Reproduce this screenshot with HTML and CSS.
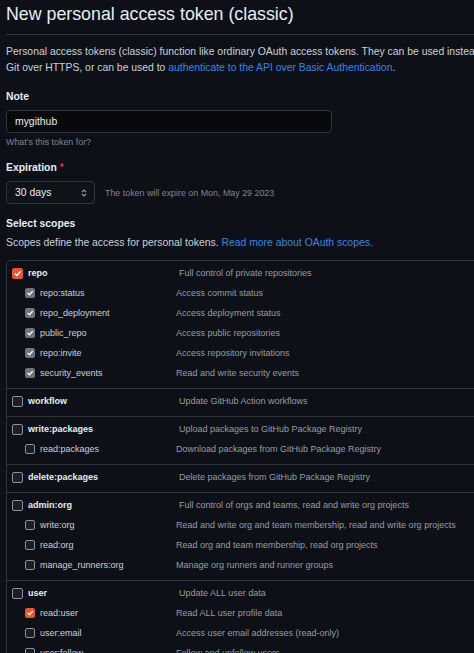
FILE: index.html
```html
<!DOCTYPE html>
<html lang="en">
<head>
<meta charset="utf-8">
<title>New personal access token (classic)</title>
<link rel="stylesheet" href="styles.css">
</head>
<body>
<main class="page">
  <h1 class="title">New personal access token (classic)</h1>
  <p class="intro">Personal access tokens (classic) function like ordinary OAuth access tokens. They can be used instead of a password for Git over HTTPS, or can be used to <a href="#">authenticate to the API over Basic Authentication</a>.</p>

  <div class="field note-field">
    <label class="label" for="note">Note</label>
    <input id="note" class="input" type="text" value="mygithub">
    <p class="hint">What's this token for?</p>
  </div>

  <div class="field exp-field">
    <div class="label">Expiration <span class="req">*</span></div>
    <div class="exp-row">
      <div class="select">
        <span>30 days</span>
        <svg class="arrows" viewBox="0 0 6 10" width="6" height="10"><path d="M1 4 3 2 5 4M1 6 3 8 5 6"/></svg>
      </div>
      <span class="exp-note">The token will expire on Mon, May 29 2023</span>
    </div>
  </div>

  <h2 class="label section">Select scopes</h2>
  <p class="scopes-intro">Scopes define the access for personal tokens. <a href="#">Read more about OAuth scopes.</a></p>

  <div class="scopes">
    <div class="group">
      <div class="row main"><span class="name"><span class="cb on"><svg viewBox="0 0 10 10"><path d="M2.3 5.2 4.3 7.2 8 3.1"/></svg></span>repo</span><span class="desc">Full control of private repositories</span></div>
      <div class="row sub"><span class="name"><span class="cb dis"><svg viewBox="0 0 10 10"><path d="M2.3 5.2 4.3 7.2 8 3.1"/></svg></span>repo:status</span><span class="desc">Access commit status</span></div>
      <div class="row sub"><span class="name"><span class="cb dis"><svg viewBox="0 0 10 10"><path d="M2.3 5.2 4.3 7.2 8 3.1"/></svg></span>repo_deployment</span><span class="desc">Access deployment status</span></div>
      <div class="row sub"><span class="name"><span class="cb dis"><svg viewBox="0 0 10 10"><path d="M2.3 5.2 4.3 7.2 8 3.1"/></svg></span>public_repo</span><span class="desc">Access public repositories</span></div>
      <div class="row sub"><span class="name"><span class="cb dis"><svg viewBox="0 0 10 10"><path d="M2.3 5.2 4.3 7.2 8 3.1"/></svg></span>repo:invite</span><span class="desc">Access repository invitations</span></div>
      <div class="row sub"><span class="name"><span class="cb dis"><svg viewBox="0 0 10 10"><path d="M2.3 5.2 4.3 7.2 8 3.1"/></svg></span>security_events</span><span class="desc">Read and write security events</span></div>
    </div>
    <div class="group">
      <div class="row main"><span class="name"><span class="cb"></span>workflow</span><span class="desc">Update GitHub Action workflows</span></div>
    </div>
    <div class="group">
      <div class="row main"><span class="name"><span class="cb"></span>write:packages</span><span class="desc">Upload packages to GitHub Package Registry</span></div>
      <div class="row sub"><span class="name"><span class="cb"></span>read:packages</span><span class="desc">Download packages from GitHub Package Registry</span></div>
    </div>
    <div class="group">
      <div class="row main"><span class="name"><span class="cb"></span>delete:packages</span><span class="desc">Delete packages from GitHub Package Registry</span></div>
    </div>
    <div class="group">
      <div class="row main"><span class="name"><span class="cb"></span>admin:org</span><span class="desc">Full control of orgs and teams, read and write org projects</span></div>
      <div class="row sub"><span class="name"><span class="cb"></span>write:org</span><span class="desc">Read and write org and team membership, read and write org projects</span></div>
      <div class="row sub"><span class="name"><span class="cb"></span>read:org</span><span class="desc">Read org and team membership, read org projects</span></div>
      <div class="row sub"><span class="name"><span class="cb"></span>manage_runners:org</span><span class="desc">Manage org runners and runner groups</span></div>
    </div>
    <div class="group">
      <div class="row main"><span class="name"><span class="cb"></span>user</span><span class="desc">Update ALL user data</span></div>
      <div class="row sub"><span class="name"><span class="cb on"><svg viewBox="0 0 10 10"><path d="M2.3 5.2 4.3 7.2 8 3.1"/></svg></span>read:user</span><span class="desc">Read ALL user profile data</span></div>
      <div class="row sub"><span class="name"><span class="cb"></span>user:email</span><span class="desc">Access user email addresses (read-only)</span></div>
      <div class="row sub"><span class="name"><span class="cb"></span>user:follow</span><span class="desc">Follow and unfollow users</span></div>
    </div>
  </div>
</main>
</body>
</html>
```

FILE: styles.css
```css
html, body {
  margin: 0;
  padding: 0;
  background: #0d1117;
  overflow: hidden;
}

body {
  font-family: "Liberation Sans", Arial, sans-serif;
  font-size: 10.4px;
  line-height: 16px;
  color: #c9d1d9;
}

.page {
  width: 570px;
  padding-left: 6px;
  box-sizing: border-box;
}

a {
  color: #3b82e8;
  text-decoration: none;
}

.title {
  margin: 0;
  padding: 2px 0 8px;
  font-size: 17.8px;
  line-height: 24px;
  font-weight: 400;
  color: #e6edf3;
  border-bottom: 1px solid #30363d;
}

.intro {
  margin: 9px 0 0;
  line-height: 16px;
}

.field {
  display: flex;
  flex-direction: column;
  align-items: flex-start;
}

.note-field {
  margin-top: 13px;
}

.label {
  display: block;
  margin: 0;
  font-size: 10.4px;
  line-height: 16px;
  font-weight: 700;
  color: #e6edf3;
}

.req {
  color: #f85149;
  font-weight: 400;
}

.input {
  margin: 5px 0 0;
  width: 326px;
  height: 23px;
  box-sizing: border-box;
  padding: 0 8px;
  border: 1px solid #30363d;
  border-radius: 4px;
  background: #07090d;
  color: #e6edf3;
  font-family: inherit;
  font-size: 10.4px;
  outline: none;
}

.hint {
  margin: 3px 0 0;
  font-size: 8.9px;
  line-height: 13px;
  color: #7d8590;
}

.exp-field {
  margin-top: 11px;
}

.exp-row {
  margin-top: 5px;
  display: flex;
  align-items: center;
  gap: 10px;
}

.select {
  width: 89px;
  height: 23px;
  box-sizing: border-box;
  padding: 0 7px 0 8px;
  border: 1px solid #30363d;
  border-radius: 4px;
  background: #0f1318;
  color: #e6edf3;
  display: flex;
  align-items: center;
  justify-content: space-between;
}

.arrows {
  fill: none;
  stroke: #8b949e;
  stroke-width: 1.2;
}

.exp-note {
  font-size: 8.9px;
  color: #7d8590;
}

.section {
  margin-top: 12px;
}

.scopes-intro {
  margin: 3px 0 0;
}

.scopes {
  margin-top: 9px;
  border: 1px solid #30363d;
  border-radius: 5px;
}

.group {
  padding: 2px 0 5px;
}

.group + .group {
  border-top: 1px solid #30363d;
}

.row {
  display: flex;
  align-items: center;
  height: 20px;
  font-size: 9px;
  line-height: 20px;
  white-space: nowrap;
}

.name {
  display: flex;
  align-items: center;
  gap: 5px;
  box-sizing: border-box;
  flex: none;
}

.main .name {
  width: 172px;
  padding-left: 5px;
  font-weight: 700;
  color: #e6edf3;
}

.sub .name {
  width: 169px;
  padding-left: 18px;
  color: #c9d1d9;
}

.desc {
  color: #959ca4;
}

.cb {
  width: 11px;
  height: 11px;
  box-sizing: border-box;
  border: 1px solid #8d9196;
  border-radius: 2px;
  background: #1b1f25;
  display: flex;
  align-items: center;
  justify-content: center;
  flex: none;
}

.sub .cb {
  width: 10px;
  height: 10px;
}

.cb svg {
  width: 100%;
  height: 100%;
  fill: none;
  stroke: #ffffff;
  stroke-width: 1.6;
  stroke-linecap: round;
  stroke-linejoin: round;
}

.cb.on {
  background: #e9552a;
  border-color: #e9552a;
}

.cb.dis {
  background: #707379;
  border-color: #707379;
}
```
